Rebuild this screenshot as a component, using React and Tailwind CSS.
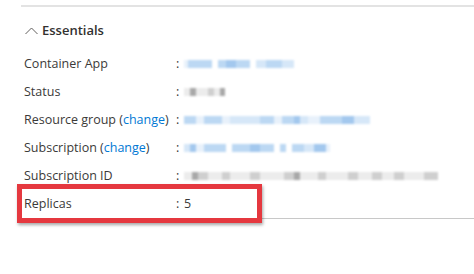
// pixelated (redacted) value: list of [width, colour]
function Redacted({ cells }) {
  return (
    <div className="flex items-center h-[8px] blur-[0.8px]">
      {cells.map(([w, c], i) => (
        <span key={i} className="h-full" style={{ width: w, background: c }} />
      ))}
    </div>
  )
}

const B1 = '#d6e7f8', B2 = '#bcd8f3', B3 = '#a3c8ee', B4 = '#e8f1fb'
const G1 = '#ececec', G2 = '#cfcfcf', G3 = '#a8a8a8', W = 'transparent'

const ROWS = [
  {
    label: 'Container App',
    cells: [[4, B4], [24, B2], [6, W], [8, B2], [10, B3], [14, B2], [6, W], [10, B1], [16, B2], [12, B1]],
  },
  {
    label: 'Status',
    cells: [[6, G1], [6, G3], [12, G1], [6, G2], [6, G1], [5, G3]],
  },
  {
    label: 'Resource group',
    change: true,
    cells: [[12, B2], [8, B4], [18, B2], [8, B4], [30, B1], [14, B2], [8, B4], [12, B2], [6, B3], [8, B1], [12, B4], [22, B2], [12, B3], [16, B1]],
  },
  {
    label: 'Subscription',
    change: true,
    cells: [[6, B1], [6, B3], [8, B4], [22, B2], [6, W], [18, B2], [10, B3], [14, B2], [6, W], [6, B2], [6, W], [12, B2], [10, B1], [12, B3], [4, B4]],
  },
  {
    label: 'Subscription ID',
    cells: [[8, G1], [6, G3], [10, G2], [14, G1], [8, G2], [20, G1], [10, G2], [24, G1], [10, G2], [6, G3], [18, G1], [8, G2], [22, G1], [10, G2], [14, G1], [10, G2], [12, G1], [10, G2], [20, G1], [14, G2]],
  },
]

function Row({ label, change, children }) {
  return (
    <div className="flex items-center h-[28px] pl-[3px]">
      <div className="w-[152px] shrink-0 whitespace-nowrap">
        {label}
        {change && (
          <>
            {' ('}
            <span className="text-[#0078d4]">change</span>
            {')'}
          </>
        )}
      </div>
      <span className="w-[8px] shrink-0">:</span>
      {children}
    </div>
  )
}

export default function App() {
  return (
    <div
      className="w-[474px] h-[274px] bg-white overflow-hidden text-[12.5px] text-[#3b3a39]"
      style={{ fontFamily: '"Open Sans", "Noto Sans", sans-serif' }}
    >
      <div className="ml-[21px] mt-[5px] border-t-2 border-[#e3e3e3]">
        <div className="flex items-center gap-[4px] h-[28px] mt-[10px] mb-[5px] pl-[4px]">
          <svg width="13" height="8" viewBox="0 0 13 8" className="text-[#605e5c]">
            <polyline points="0.5,7 6.5,1 12.5,7" fill="none" stroke="currentColor" strokeWidth="1" />
          </svg>
          <span className="text-[13px] font-semibold text-[#323130]">Essentials</span>
        </div>

        {ROWS.map(r => (
          <Row key={r.label} label={r.label} change={r.change}>
            <Redacted cells={r.cells} />
          </Row>
        ))}

        <div className="relative border-b border-[#c8c8c8]">
          <Row label="Replicas">
            <span>5</span>
          </Row>
          <div className="absolute left-[-4px] top-[-6px] w-[245px] h-[39px] border-[5px] border-[#e5383f] shadow-[1px_2px_3px_rgba(0,0,0,0.35)]" />
        </div>
      </div>
    </div>
  )
}
